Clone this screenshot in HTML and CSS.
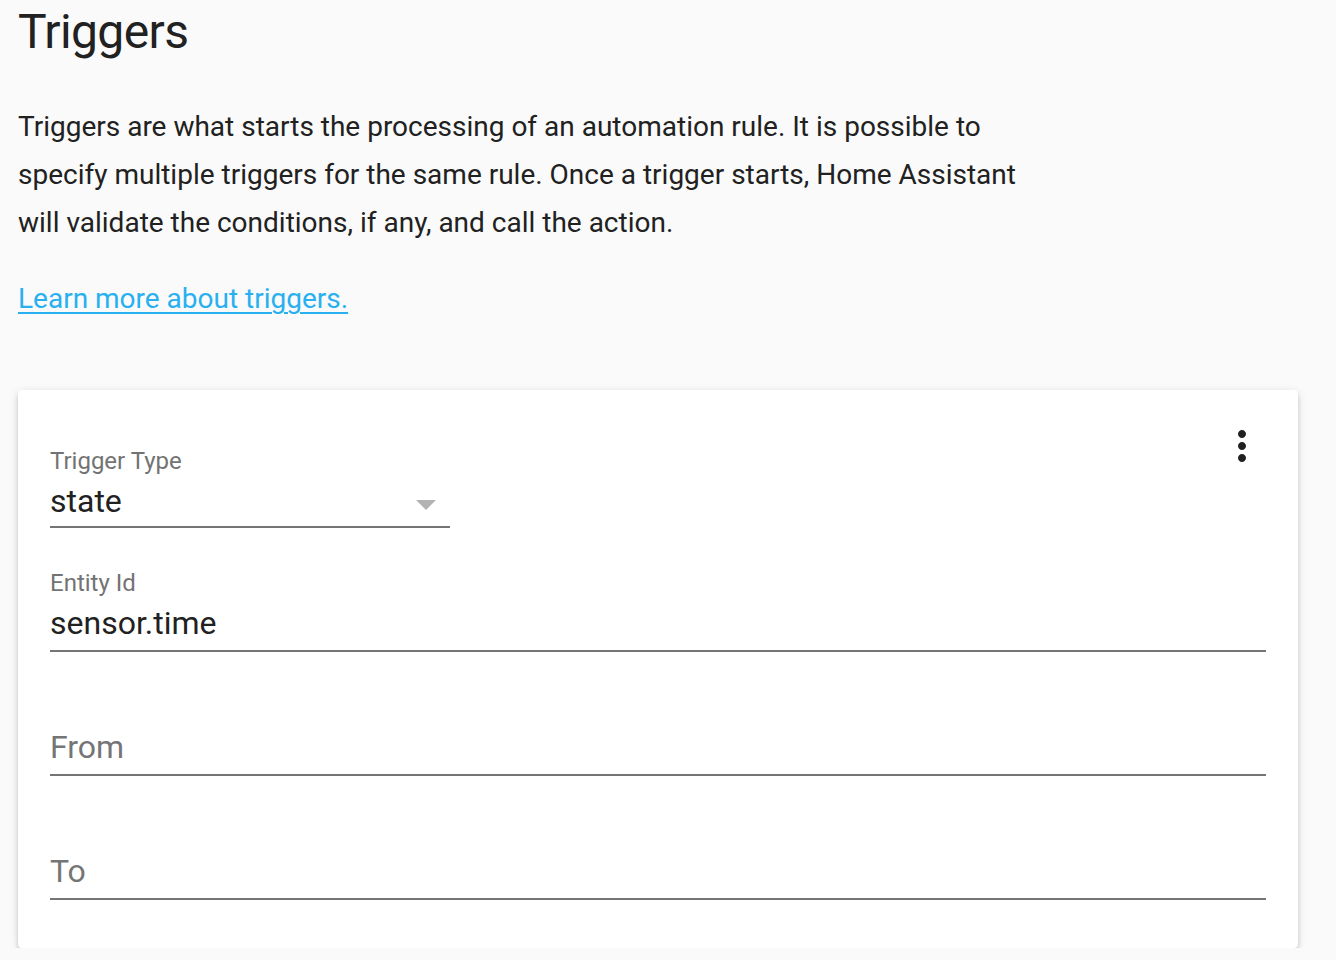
FILE: index.html
```html
<!DOCTYPE html>
<html lang="en">
<head>
<meta charset="utf-8">
<title>Triggers</title>
<link rel="stylesheet" href="styles.css">
</head>
<body>
<div class="page">
  <h1 class="title">Triggers</h1>
  <p class="intro">Triggers are what starts the processing of an automation rule. It is possible to specify multiple triggers for the same rule. Once a trigger starts, Home Assistant will validate the conditions, if any, and call the action.</p>
  <p class="more"><a class="link" href="#">Learn more about triggers.</a></p>

  <div class="card">
    <div class="card-head">
      <div class="field field-select">
        <div class="label">Trigger Type</div>
        <div class="value select-value">
          <span>state</span>
          <svg class="arrow" width="48" height="48" viewBox="0 0 24 24"><path d="M7 10l5 5 5-5z" fill="#b3b3b3"/></svg>
        </div>
      </div>
      <svg class="menu" width="48" height="48" viewBox="0 0 24 24"><path d="M12 8c1.1 0 2-.9 2-2s-.9-2-2-2-2 .9-2 2 .9 2 2 2zm0 2c-1.1 0-2 .9-2 2s.9 2 2 2 2-.9 2-2-.9-2-2-2zm0 6c-1.1 0-2 .9-2 2s.9 2 2 2 2-.9 2-2-.9-2-2-2z" fill="#212121"/></svg>
    </div>

    <div class="field">
      <div class="label">Entity Id</div>
      <div class="value">sensor.time</div>
    </div>

    <div class="field">
      <div class="label label-empty"></div>
      <div class="value placeholder">From</div>
    </div>

    <div class="field">
      <div class="label label-empty"></div>
      <div class="value placeholder">To</div>
    </div>
  </div>
</div>
</body>
</html>
```

FILE: styles.css
```css
html, body {
  margin: 0;
  padding: 0;
  background: #fafafa;
}

body {
  font-family: Roboto, "Noto Sans", sans-serif;
  color: #212121;
}

.page {
  width: 1280px;
  margin-left: 18px;
}

.title {
  font-size: 48px;
  line-height: 64px;
  font-weight: 400;
  letter-spacing: -0.6px;
  margin: 0 0 39px 0;
}

.intro {
  font-size: 28px;
  line-height: 48px;
  margin: 0 0 28px 0;
  max-width: 1024px;
}

.more {
  font-size: 28px;
  line-height: 48px;
  margin: 0 0 67px 0;
}

.link {
  color: #28b0f0;
  text-decoration: underline;
  text-decoration-thickness: 2px;
  text-underline-offset: 4px;
}

.card {
  background: #fff;
  border-radius: 4px;
  box-shadow: 0 4px 4px 0 rgba(0,0,0,.14), 0 2px 10px 0 rgba(0,0,0,.12), 0 6px 2px -4px rgba(0,0,0,.2);
  padding: 32px 32px 48px 32px;
  display: flex;
  flex-direction: column;
  gap: 40px;
}

.card-head {
  display: flex;
  justify-content: space-between;
  align-items: flex-start;
}

.menu {
  display: block;
}

.field {
  display: flex;
  flex-direction: column;
}

.field-select {
  width: 400px;
  padding-top: 24px;
}

.label {
  font-size: 24px;
  line-height: 30px;
  height: 30px;
  color: #737373;
}

.value {
  font-size: 32px;
  line-height: 48px;
  padding: 1px 0 3px 0;
  border-bottom: 2px solid #757575;
  color: #212121;
}

.select-value {
  display: flex;
  justify-content: space-between;
  align-items: flex-start;
  padding: 1px 0 1px 0;
}

.arrow {
  display: block;
  margin-top: 3px;
  margin-bottom: -3px;
}

.placeholder {
  color: #757575;
}
```
